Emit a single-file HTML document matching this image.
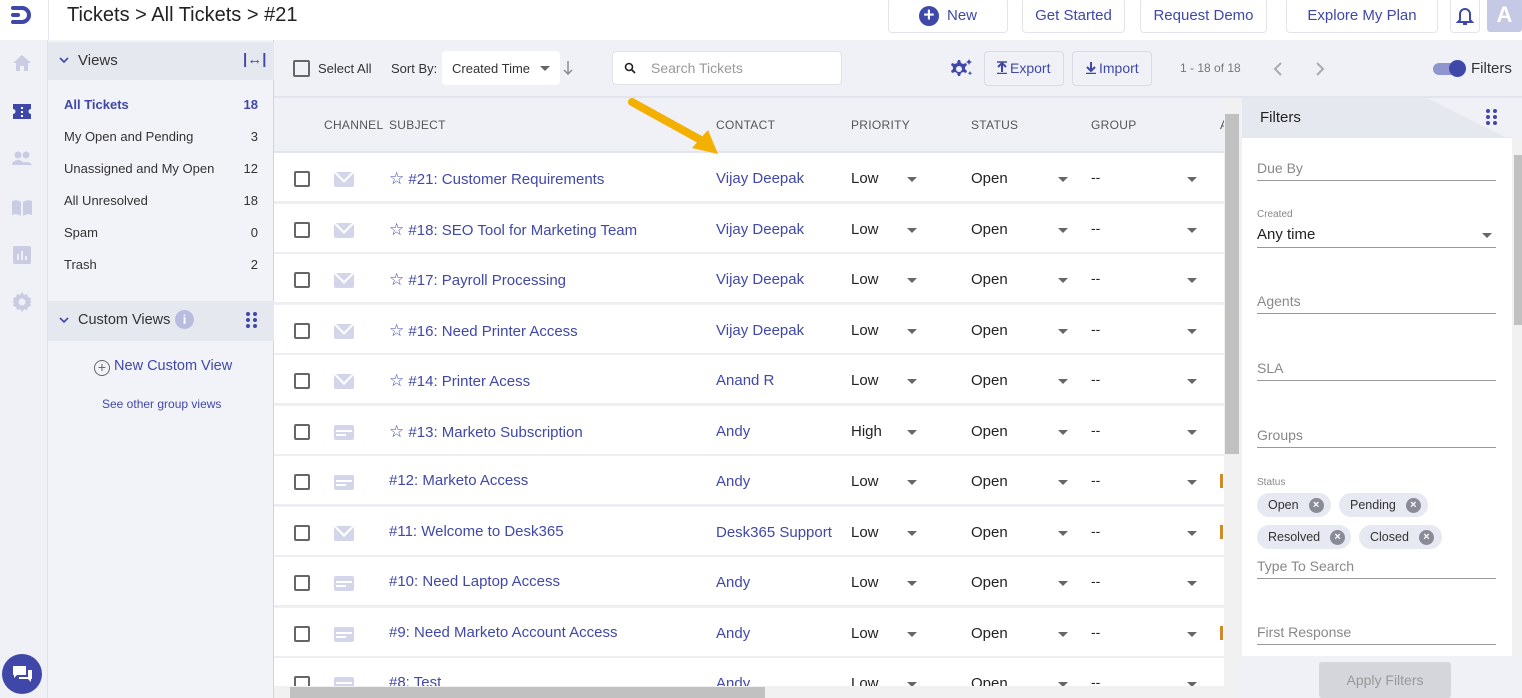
<!DOCTYPE html>
<html><head><meta charset="utf-8">
<style>
*{box-sizing:border-box;margin:0;padding:0}
html,body{width:1522px;height:698px;overflow:hidden}
body{position:relative;font-family:"Liberation Sans",sans-serif;background:#f0f1f7;color:#222}
.a{position:absolute}
.top{left:0;top:0;width:1522px;height:40px;background:#fff}
.btn{position:absolute;top:-2px;height:35px;border:1px solid #e3e4ea;border-radius:4px;background:#fff;color:#3f48a8;font-size:15px;display:flex;align-items:center;justify-content:center}
.nav{left:0;top:40px;width:48px;height:658px;background:#f0f1f7;border-right:1px solid #e0e2ea}
.side{left:48px;top:40px;width:226px;height:658px;background:#f2f3f8;border-right:1px solid #cfd3e6}
.vi{position:absolute;left:16px;font-size:13px;color:#333}
.vn{position:absolute;right:15px;font-size:13px;color:#333}
.row{position:absolute;left:274px;width:950px;height:50px;background:#fff;border-bottom:2px solid #eceef2}
.cb{position:absolute;left:20px;top:18px;width:16px;height:16px;border:2px solid #666;border-radius:2px}
.ch{position:absolute;left:60px;top:19px;width:20px;height:15px;background:#d3d6ea;border-radius:2px;overflow:hidden}
.m::after{content:"";position:absolute;left:3px;top:-6px;width:12px;height:12px;border:2px solid #fff;border-top:none;border-left:none;transform:rotate(45deg)}
.f::before{content:"";position:absolute;left:2px;top:5px;width:16px;height:2px;background:#fff}
.f::after{content:"";position:absolute;left:2px;top:9px;width:10px;height:2px;background:#fff}
.subj{position:absolute;top:16px;font-size:15px;color:#4148a8;white-space:nowrap}
.ct{position:absolute;left:442px;top:17px;font-size:15px;color:#4148a8}
.pr{position:absolute;left:577px;top:17px;font-size:15px;color:#222}
.st{position:absolute;left:697px;top:17px;font-size:15px;color:#222}
.gr{position:absolute;left:817px;top:16px;font-size:14px;color:#222}
.dd{position:absolute;top:24px;width:0;height:0;border-left:5px solid transparent;border-right:5px solid transparent;border-top:5px solid #666}
.th{position:absolute;top:118px;font-size:12px;color:#555;letter-spacing:.3px}
.fl{position:absolute;left:1257px;width:239px;border-bottom:1px solid #999;font-size:14px;color:#888;padding-bottom:4px}
.chip{position:absolute;height:24px;border-radius:12px;background:#e6e8f2;font-size:12.5px;color:#333;display:flex;align-items:center;padding-left:11px}
.x{display:inline-block;width:15px;height:15px;border-radius:50%;background:#8a8b96;color:#fff;font-size:11px;line-height:15px;text-align:center;margin-left:10px;font-weight:bold}
.star{font-size:17px}
</style></head><body>
<div class="a top">
 <svg class="a" style="left:10px;top:4px" width="24" height="22" viewBox="0 0 24 22"><path d="M3 4 H12 A7 7 0 0 1 12 18 H3" fill="none" stroke="#3f48a8" stroke-width="4" stroke-linecap="round"/><path d="M3 11 h5" stroke="#3f48a8" stroke-width="4" stroke-linecap="round"/></svg>
 <div class="a" style="left:48px;top:0;width:1px;height:40px;background:#e6e7ee"></div>
 <div class="a" style="left:67px;top:4px;font-size:20px;color:#222">Tickets &gt; All Tickets &gt; #21</div>
 <div class="btn" style="left:888px;width:120px"><span style="display:inline-block;width:20px;height:20px;border-radius:50%;background:#3f48a8;color:#fff;font-size:19px;line-height:20px;text-align:center;margin-right:8px;font-weight:bold">+</span>New</div>
 <div class="btn" style="left:1022px;width:103px">Get Started</div>
 <div class="btn" style="left:1140px;width:127px">Request Demo</div>
 <div class="btn" style="left:1286px;width:152px">Explore My Plan</div>
 <div class="btn" style="left:1450px;width:30px"><svg width="18" height="20" viewBox="0 0 18 20"><path d="M4 14 V8 A5 5 0 0 1 14 8 V14 L16 16 H2 Z" fill="none" stroke="#3f48a8" stroke-width="2"/><path d="M7 18 h4" stroke="#3f48a8" stroke-width="2"/></svg></div>
 <div class="a" style="left:1487px;top:-2px;width:35px;height:34px;background:#c5c9e6;border-radius:3px;color:#fff;font-size:22px;font-weight:bold;text-align:center;line-height:34px">A</div>
</div>
<div class="a nav">
 <svg class="a" style="left:12px;top:14px" width="20" height="18"><path d="M10 1 L1 9 H4 V17 H8 V12 H12 V17 H16 V9 H19 Z" fill="#c9cce2"/></svg>
 <svg class="a" style="left:11px;top:63px" width="22" height="17"><path d="M2 1 H20 V6 A2.5 2.5 0 0 0 20 11 V16 H2 V11 A2.5 2.5 0 0 0 2 6 Z" fill="#3f48a8"/><rect x="10" y="4" width="2" height="2" fill="#fff"/><rect x="10" y="8" width="2" height="2" fill="#fff"/><rect x="10" y="12" width="2" height="2" fill="#fff"/></svg>
 <svg class="a" style="left:11px;top:110px" width="22" height="16"><circle cx="7" cy="5" r="3.5" fill="#c9cce2"/><circle cx="15" cy="5" r="3.5" fill="#c9cce2"/><path d="M1 15 A6 5 0 0 1 13 15 Z M10 15 A6 5 0 0 1 21 15 Z" fill="#c9cce2"/></svg>
 <svg class="a" style="left:11px;top:158px" width="22" height="19"><path d="M1 3 Q6 1 10 4 V18 Q6 15 1 17 Z M12 4 Q16 1 21 3 V17 Q16 15 12 18 Z" fill="#c9cce2"/></svg>
 <svg class="a" style="left:13px;top:206px" width="18" height="18"><rect width="18" height="18" rx="2" fill="#c9cce2"/><rect x="4" y="8" width="2" height="6" fill="#f0f1f7"/><rect x="8" y="5" width="2" height="9" fill="#f0f1f7"/><rect x="12" y="10" width="2" height="4" fill="#f0f1f7"/></svg>
 <svg class="a" style="left:12px;top:252px" width="20" height="20" viewBox="0 0 20 20"><path d="M10 0 l2 3 3-1 1 3 3 1-1 3 2 1-2 1 1 3-3 1-1 3-3-1-2 3-2-3-3 1-1-3-3-1 1-3-2-1 2-1-1-3 3-1 1-3 3 1z" fill="#c9cce2"/><circle cx="10" cy="10" r="3.5" fill="#f0f1f7"/></svg>
 <div class="a" style="left:2px;top:614px;width:40px;height:40px;border-radius:50%;background:#3f48a8"><svg class="a" style="left:10px;top:11px" width="22" height="20"><path d="M1 1 H14 V10 H5 L2 13 V10 H1Z" fill="#fff"/><path d="M16 5 H20 V14 H19 V17 L16 14 H7 V12 H16Z" fill="#fff"/></svg></div>
</div>
<div class="a side">
 <div class="a" style="left:0;top:2px;width:226px;height:38px;background:#e6e8f0"></div>
 <svg class="a" style="left:11px;top:17px" width="10" height="7"><path d="M1 1 L5 5 L9 1" fill="none" stroke="#3f48a8" stroke-width="1.6"/></svg>
 <div class="a" style="left:30px;top:12px;font-size:15px;color:#333">Views</div>
 <div class="a" style="left:195px;top:11px;font-size:15px;color:#3f48a8;font-weight:bold">|↔|</div>
 <div class="vi" style="top:57px;color:#3f48a8;font-weight:bold">All Tickets</div><div class="vn" style="top:57px;color:#3f48a8;font-weight:bold">18</div>
 <div class="vi" style="top:89px">My Open and Pending</div><div class="vn" style="top:89px">3</div>
 <div class="vi" style="top:121px">Unassigned and My Open</div><div class="vn" style="top:121px">12</div>
 <div class="vi" style="top:153px">All Unresolved</div><div class="vn" style="top:153px">18</div>
 <div class="vi" style="top:185px">Spam</div><div class="vn" style="top:185px">0</div>
 <div class="vi" style="top:217px">Trash</div><div class="vn" style="top:217px">2</div>
 <div class="a" style="left:0;top:261px;width:226px;height:40px;background:#e6e8f0"></div>
 <svg class="a" style="left:11px;top:277px" width="10" height="7"><path d="M1 1 L5 5 L9 1" fill="none" stroke="#3f48a8" stroke-width="1.6"/></svg>
 <div class="a" style="left:30px;top:272px;font-size:14.5px;color:#333">Custom Views</div>
 <div class="a" style="left:127px;top:270px;width:19px;height:19px;border-radius:50%;background:#b8bde0;color:#fff;font-size:13px;text-align:center;line-height:19px;font-weight:bold">i</div>
 <svg class="a" style="left:198px;top:272px" width="11" height="16"><g fill="#3f48a8"><circle cx="2" cy="2" r="2"/><circle cx="9" cy="2" r="2"/><circle cx="2" cy="8" r="2"/><circle cx="9" cy="8" r="2"/><circle cx="2" cy="14" r="2"/><circle cx="9" cy="14" r="2"/></g></svg>
 <div class="a" style="left:46px;top:318px;font-size:14.5px;color:#4148a8"><span style="display:inline-block;width:16px;height:16px;border:1.5px solid #666;border-radius:50%;text-align:center;line-height:13px;color:#666;font-size:14px;vertical-align:-2px">+</span> New Custom View</div>
 <div class="a" style="left:54px;top:357px;font-size:12px;color:#4148a8">See other group views</div>
</div>
<!-- toolbar -->
<div class="a" style="left:293px;top:60px;width:17px;height:17px;border:2px solid #666;border-radius:2px"></div>
<div class="a" style="left:318px;top:61px;font-size:13px;color:#333">Select All</div>
<div class="a" style="left:391px;top:61px;font-size:13px;color:#333">Sort By:</div>
<div class="a" style="left:442px;top:51px;width:118px;height:34px;background:#fff;border-radius:4px;font-size:13px;color:#333;padding:10px 0 0 10px">Created Time <span style="display:inline-block;margin-left:6px;border-left:5px solid transparent;border-right:5px solid transparent;border-top:5px solid #666;vertical-align:2px"></span></div>
<svg class="a" style="left:563px;top:60px" width="10" height="16"><path d="M5 1 V14 M1 10 L5 14 L9 10" fill="none" stroke="#888" stroke-width="1.4"/></svg>
<div class="a" style="left:612px;top:51px;width:230px;height:34px;background:#fff;border:1px solid #e0e2ea;border-radius:4px"></div>
<svg class="a" style="left:624px;top:62px" width="12" height="12"><circle cx="5" cy="5" r="3.5" fill="none" stroke="#222" stroke-width="1.6"/><path d="M7.5 7.5 L11 11" stroke="#222" stroke-width="1.8"/></svg>
<div class="a" style="left:651px;top:60px;font-size:14px;color:#999">Search Tickets</div>
<svg class="a" style="left:948px;top:57px" width="26" height="24" viewBox="0 0 26 24"><path d="M10 3 l2 0 1 3 2 1 3-1 1 2-2 2 0 2 2 2-1 2-3-1-2 1-1 3-2 0-1-3-2-1-3 1-1-2 2-2 0-2-2-2 1-2 3 1 2-1z" fill="#3f48a8"/><circle cx="11" cy="12" r="3" fill="#f0f1f7"/><path d="M21 2 l1 2 2 1-2 1-1 2-1-2-2-1 2-1z M22 14 l.7 1.5 1.5.7-1.5.7-.7 1.5-.7-1.5-1.5-.7 1.5-.7z" fill="#3f48a8"/></svg>
<div class="a" style="left:984px;top:51px;width:80px;height:35px;border:1px solid #d8dae6;border-radius:4px;font-size:14px;color:#3f48a8;line-height:33px;padding-left:12px"><svg width="10" height="13" style="vertical-align:-1px;margin-right:3px"><path d="M5 11 V3 M1 6 L5 2 L9 6" fill="none" stroke="#3f48a8" stroke-width="2"/><path d="M0 1 H10" stroke="#3f48a8" stroke-width="1.5"/><path d="M0 12.5 H10" stroke="#3f48a8" stroke-width="1.5"/></svg>Export</div>
<div class="a" style="left:1072px;top:51px;width:80px;height:35px;border:1px solid #d8dae6;border-radius:4px;font-size:14px;color:#3f48a8;line-height:33px;padding-left:13px"><svg width="10" height="13" style="vertical-align:-1px;margin-right:3px"><path d="M5 1 V9 M1 6 L5 10 L9 6" fill="none" stroke="#3f48a8" stroke-width="2"/><path d="M0 12.5 H10" stroke="#3f48a8" stroke-width="1.5"/></svg>Import</div>
<div class="a" style="left:1180px;top:61px;font-size:12px;color:#777">1 - 18 of 18</div>
<svg class="a" style="left:1273px;top:61px" width="10" height="16"><path d="M8 2 L2 8 L8 14" fill="none" stroke="#aaa" stroke-width="2"/></svg>
<svg class="a" style="left:1315px;top:61px" width="10" height="16"><path d="M2 2 L8 8 L2 14" fill="none" stroke="#aaa" stroke-width="2"/></svg>
<div class="a" style="left:1433px;top:63px;width:32px;height:12px;border-radius:6px;background:#8f95cf"></div>
<div class="a" style="left:1449px;top:60px;width:17px;height:17px;border-radius:50%;background:#3f48a8"></div>
<div class="a" style="left:1471px;top:60px;font-size:15px;color:#333">Filters</div>
<div class="a" style="left:274px;top:96px;width:1248px;height:2px;background:#e3e5ee"></div>
<!-- header -->
<div class="th" style="left:324px">CHANNEL</div><div class="th" style="left:389px">SUBJECT</div>
<div class="th" style="left:716px">CONTACT</div><div class="th" style="left:851px">PRIORITY</div>
<div class="th" style="left:971px">STATUS</div><div class="th" style="left:1091px">GROUP</div><div class="th" style="left:1220px">A</div>
<div class="a" style="left:274px;top:151px;width:950px;height:2px;background:#e3e5ee"></div>
<!-- rows -->
<div class="row" style="top:153px"><div class="cb"></div><div class="ch m"></div><div class="subj" style="left:115px"><span class="star">☆</span> #21: Customer Requirements</div><div class="ct">Vijay Deepak</div><div class="pr">Low</div><div class="dd" style="left:633px"></div><div class="st">Open</div><div class="dd" style="left:784px"></div><div class="gr">--</div><div class="dd" style="left:913px"></div></div>
<div class="row" style="top:203.5px"><div class="cb"></div><div class="ch m"></div><div class="subj" style="left:115px"><span class="star">☆</span> #18: SEO Tool for Marketing Team</div><div class="ct">Vijay Deepak</div><div class="pr">Low</div><div class="dd" style="left:633px"></div><div class="st">Open</div><div class="dd" style="left:784px"></div><div class="gr">--</div><div class="dd" style="left:913px"></div></div>
<div class="row" style="top:254px"><div class="cb"></div><div class="ch m"></div><div class="subj" style="left:115px"><span class="star">☆</span> #17: Payroll Processing</div><div class="ct">Vijay Deepak</div><div class="pr">Low</div><div class="dd" style="left:633px"></div><div class="st">Open</div><div class="dd" style="left:784px"></div><div class="gr">--</div><div class="dd" style="left:913px"></div></div>
<div class="row" style="top:304.5px"><div class="cb"></div><div class="ch m"></div><div class="subj" style="left:115px"><span class="star">☆</span> #16: Need Printer Access</div><div class="ct">Vijay Deepak</div><div class="pr">Low</div><div class="dd" style="left:633px"></div><div class="st">Open</div><div class="dd" style="left:784px"></div><div class="gr">--</div><div class="dd" style="left:913px"></div></div>
<div class="row" style="top:355px"><div class="cb"></div><div class="ch m"></div><div class="subj" style="left:115px"><span class="star">☆</span> #14: Printer Acess</div><div class="ct">Anand R</div><div class="pr">Low</div><div class="dd" style="left:633px"></div><div class="st">Open</div><div class="dd" style="left:784px"></div><div class="gr">--</div><div class="dd" style="left:913px"></div></div>
<div class="row" style="top:405.5px"><div class="cb"></div><div class="ch f"></div><div class="subj" style="left:115px"><span class="star">☆</span> #13: Marketo Subscription</div><div class="ct">Andy</div><div class="pr">High</div><div class="dd" style="left:633px"></div><div class="st">Open</div><div class="dd" style="left:784px"></div><div class="gr">--</div><div class="dd" style="left:913px"></div></div>
<div class="row" style="top:456px"><div class="cb"></div><div class="ch f"></div><div class="subj" style="left:115px">#12: Marketo Access</div><div class="ct">Andy</div><div class="pr">Low</div><div class="dd" style="left:633px"></div><div class="st">Open</div><div class="dd" style="left:784px"></div><div class="gr">--</div><div class="dd" style="left:913px"></div><div class="a" style="left:946px;top:18px;width:3px;height:14px;background:#d08a2a"></div></div>
<div class="row" style="top:506.5px"><div class="cb"></div><div class="ch m"></div><div class="subj" style="left:115px">#11: Welcome to Desk365</div><div class="ct">Desk365 Support</div><div class="pr">Low</div><div class="dd" style="left:633px"></div><div class="st">Open</div><div class="dd" style="left:784px"></div><div class="gr">--</div><div class="dd" style="left:913px"></div><div class="a" style="left:946px;top:18px;width:3px;height:14px;background:#d08a2a"></div></div>
<div class="row" style="top:557px"><div class="cb"></div><div class="ch f"></div><div class="subj" style="left:115px">#10: Need Laptop Access</div><div class="ct">Andy</div><div class="pr">Low</div><div class="dd" style="left:633px"></div><div class="st">Open</div><div class="dd" style="left:784px"></div><div class="gr">--</div><div class="dd" style="left:913px"></div></div>
<div class="row" style="top:607.5px"><div class="cb"></div><div class="ch f"></div><div class="subj" style="left:115px">#9: Need Marketo Account Access</div><div class="ct">Andy</div><div class="pr">Low</div><div class="dd" style="left:633px"></div><div class="st">Open</div><div class="dd" style="left:784px"></div><div class="gr">--</div><div class="dd" style="left:913px"></div><div class="a" style="left:946px;top:18px;width:3px;height:14px;background:#d08a2a"></div></div>
<div class="row" style="top:658px"><div class="cb"></div><div class="ch f"></div><div class="subj" style="left:115px">#8: Test</div><div class="ct">Andy</div><div class="pr">Low</div><div class="dd" style="left:633px"></div><div class="st">Open</div><div class="dd" style="left:784px"></div><div class="gr">--</div><div class="dd" style="left:913px"></div></div>
<!-- scrollbars -->
<div class="a" style="left:1224px;top:98px;width:16px;height:600px;background:#f1f1f1"></div>
<div class="a" style="left:1225px;top:114px;width:14px;height:340px;background:#c1c1c1"></div>
<div class="a" style="left:274px;top:686px;width:950px;height:12px;background:#f1f1f1"></div>
<div class="a" style="left:290px;top:687px;width:475px;height:11px;background:#c1c1c1"></div>
<!-- arrow -->
<svg class="a" style="left:620px;top:92px" width="110" height="70"><path d="M12 10 L88 52" stroke="#f3b000" stroke-width="8" stroke-linecap="round"/><path d="M98 62 L72 56 L88 38 Z" fill="#f3b000"/></svg>
<!-- filter panel -->
<div class="a" style="left:1240px;top:98px;width:282px;height:600px;background:#f0f1f7"></div>
<svg class="a" style="left:1242px;top:98px" width="270" height="40"><path d="M0 0 H185 L265 40 H0Z" fill="#e6e8f0"/></svg>
<div class="a" style="left:1260px;top:109px;font-size:15px;color:#222">Filters</div>
<svg class="a" style="left:1486px;top:109px" width="11" height="16"><g fill="#3f48a8"><circle cx="2" cy="2" r="2"/><circle cx="9" cy="2" r="2"/><circle cx="2" cy="8" r="2"/><circle cx="9" cy="8" r="2"/><circle cx="2" cy="14" r="2"/><circle cx="9" cy="14" r="2"/></g></svg>
<div class="a" style="left:1242px;top:138px;width:270px;height:518px;background:#fff"></div>
<div class="a" style="left:1512px;top:138px;width:10px;height:518px;background:#f1f1f1"></div>
<div class="a" style="left:1514px;top:155px;width:8px;height:170px;background:#c1c1c1"></div>
<div class="fl" style="top:160px">Due By</div>
<div class="a" style="left:1257px;top:209px;font-size:10px;color:#888">Created</div>
<div class="fl" style="top:226px;color:#222;font-size:15px">Any time<span style="position:absolute;right:4px;top:7px;border-left:5px solid transparent;border-right:5px solid transparent;border-top:5px solid #666"></span></div>
<div class="fl" style="top:293px">Agents</div>
<div class="fl" style="top:360px">SLA</div>
<div class="fl" style="top:427px">Groups</div>
<div class="a" style="left:1257px;top:477px;font-size:10px;color:#888">Status</div>
<div class="chip" style="left:1257px;top:493px;width:74px">Open<span class="x">×</span></div>
<div class="chip" style="left:1339px;top:493px;width:89px">Pending<span class="x">×</span></div>
<div class="chip" style="left:1257px;top:525px;width:94px">Resolved<span class="x">×</span></div>
<div class="chip" style="left:1359px;top:525px;width:83px">Closed<span class="x">×</span></div>
<div class="fl" style="top:558px">Type To Search</div>
<div class="fl" style="top:624px">First Response</div>
<div class="a" style="left:1319px;top:662px;width:132px;height:36px;background:#d5d6dc;border-radius:3px;color:#999;font-size:14px;text-align:center;line-height:36px">Apply Filters</div>
</body></html>
